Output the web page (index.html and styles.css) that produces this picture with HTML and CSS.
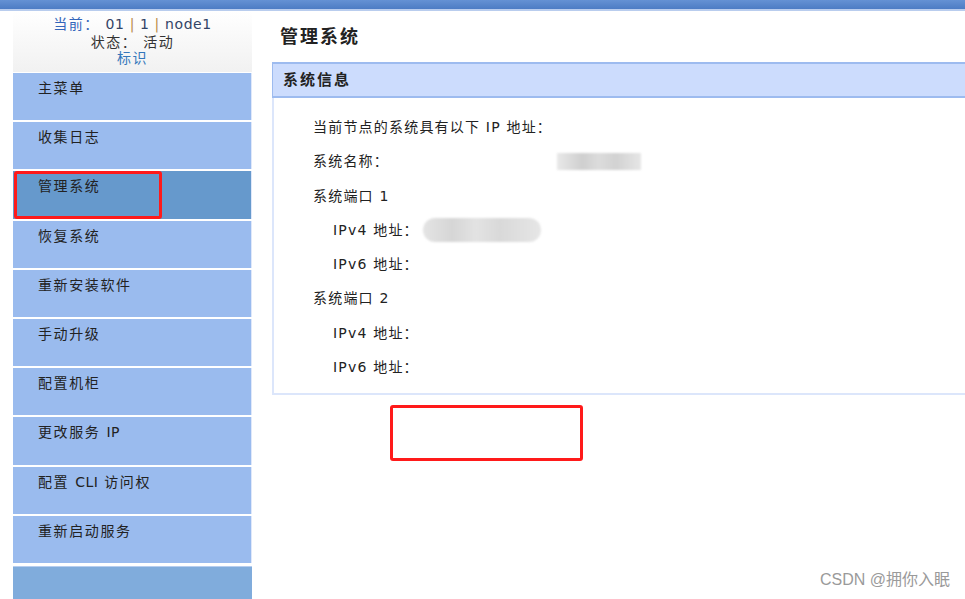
FILE: index.html
```html
<!DOCTYPE html>
<html lang="zh">
<head>
<meta charset="utf-8">
<link rel="stylesheet" href="styles.css">
</head>
<body>
<div class="topbar"></div>
<div class="main">
  <aside class="sidebar">
    <div class="status">
      <div class="line"><span class="lbl">当前：</span> <span class="node">01 <span class="pipe">|</span> 1 <span class="pipe">|</span> node1</span></div>
      <div class="line">状态： 活动</div>
      <div class="line link">标识</div>
    </div>
    <nav class="menu">
      <div class="item">主菜单</div>
      <div class="item">收集日志</div>
      <div class="item active">管理系统<span class="mark mark-menu"></span></div>
      <div class="item">恢复系统</div>
      <div class="item">重新安装软件</div>
      <div class="item">手动升级</div>
      <div class="item">配置机柜</div>
      <div class="item">更改服务 <span class="latin">IP</span></div>
      <div class="item">配置 <span class="latin">CLI</span> 访问权</div>
      <div class="item">重新启动服务</div>
      <div class="menu-foot"></div>
    </nav>
  </aside>
  <section class="content">
    <h1 class="title">管理系统</h1>
    <div class="panel">
      <div class="panel-head">系统信息</div>
      <div class="panel-body">
        <div class="row">当前节点的系统具有以下 IP 地址：</div>
        <div class="row">系统名称：<span class="blur blur-name"></span></div>
        <div class="row">系统端口 1</div>
        <div class="row sub">IPv4 地址：<span class="blur blur-ip"></span></div>
        <div class="row sub">IPv6 地址：</div>
        <div class="row">系统端口 2</div>
        <div class="row sub">IPv4 地址：</div>
        <div class="row sub">IPv6 地址：</div>
      </div>
    </div>
    <div class="mark mark-empty"></div>
  </section>
</div>
<div class="watermark">CSDN @拥你入眠</div>
</body>
</html>
```

FILE: styles.css
```css
html, body {
  margin: 0;
  padding: 0;
  background: #ffffff;
  width: 965px;
  height: 599px;
  overflow: hidden;
  font-family: "DejaVu Sans", "Noto Sans CJK SC", sans-serif;
  font-size: 13px;
  color: #222;
  position: relative;
}
.topbar {
  height: 9px;
  background: linear-gradient(#6592d4, #4d7cc4);
  border-bottom: 2px solid #b9cdee;
}
.main {
  display: flex;
  align-items: flex-start;
}
.sidebar {
  margin-left: 13px;
  width: 239px;
  flex: none;
}
.status {
  height: 61px;
  background: linear-gradient(#ffffff, #f1f1f1);
  text-align: center;
  font-size: 14px;
  letter-spacing: 1.5px;
  line-height: 18px;
  padding-top: 4px;
  box-sizing: border-box;
  color: #333;
}
.status .lbl { color: #3366bb; }
.status .node { color: #334466; letter-spacing: 0.6px; }
.status .pipe { color: #b98a4a; }
.status .link { color: #3377bb; line-height: 15px; }
.menu {
  display: flex;
  flex-direction: column;
  gap: 2px;
  padding-top: 1px;
  background: #ffffff;
}
.item {
  position: relative;
  height: 47.2px;
  box-sizing: border-box;
  padding: 7px 0 0 25px;
  line-height: 16px;
  background: #9abbee;
  color: #222;
  font-size: 14px;
  letter-spacing: 1.6px;
  border-right: 1px solid #dfe8fa;
}
.item .latin {
  letter-spacing: 0.4px;
}
.item.active {
  background: #6699cc;
}
.menu-foot {
  height: 40px;
  margin-top: 1px;
  background: #80acdc;
  border-top: 1px solid #b5cdf0;
}
.content {
  flex: 1;
  margin-left: 20px;
  position: relative;
  min-width: 0;
}
.title {
  margin: 15px 0 0 8px;
  font-size: 18px;
  letter-spacing: 2px;
  font-weight: bold;
  line-height: 22px;
  height: 36px;
  color: #222;
}
.panel {
  margin-right: -20px;
}
.panel-head {
  height: 32px;
  line-height: 32px;
  padding-left: 10px;
  background: #ccdcfd;
  border-top: 2px solid #9dbbef;
  border-bottom: 2px solid #9dbbef;
  border-left: 1px solid #9dbbef;
  font-weight: bold;
  font-size: 15px;
  letter-spacing: 2px;
  color: #222;
}
.panel-body {
  border-left: 2px solid #dce6fb;
  border-bottom: 2px solid #dce6fb;
  padding: 17px 0 15px 39px;
  height: 297px;
  box-sizing: border-box;
}
.row {
  height: 34.3px;
  line-height: 24px;
  font-size: 14px;
  letter-spacing: 1.2px;
  position: relative;
  color: #222;
}
.row.sub {
  padding-left: 20px;
}
.blur {
  position: absolute;
  background: linear-gradient(90deg, #e9e9e9, #cfcfcf 30%, #dcdcdc 50%, #d2d2d2 70%, #e6e6e6);
  filter: blur(1px);
}
.blur-name {
  left: 244px;
  top: 4px;
  width: 84px;
  height: 17px;
}
.blur-ip {
  left: 110px;
  top: 0px;
  width: 118px;
  height: 24px;
  border-radius: 12px;
  background: linear-gradient(90deg, #e4e4e4, #d6d6d6 25%, #e3e3e3 45%, #d9d9d9 65%, #e6e6e6);
}
.mark {
  position: absolute;
  border: 3px solid #ff1a1a;
  border-radius: 3px;
  box-sizing: border-box;
}
.mark-menu {
  left: 1px;
  top: 0;
  width: 148px;
  height: 48px;
}
.mark-empty {
  left: 118px;
  top: 394px;
  width: 193px;
  height: 56px;
}
.watermark {
  position: absolute;
  right: 15px;
  bottom: 9px;
  font-family: "Liberation Sans", "Noto Sans CJK SC", sans-serif;
  font-size: 16px;
  color: #9a9a9a;
}
```
